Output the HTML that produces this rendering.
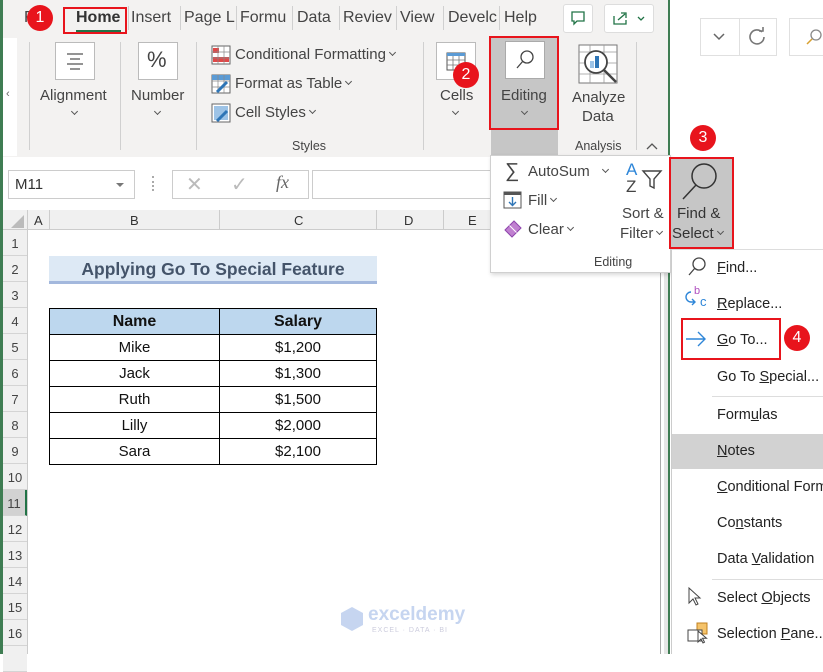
<!DOCTYPE html>
<html><head><meta charset="utf-8"><style>
*{margin:0;padding:0;box-sizing:border-box}
body{width:823px;height:654px;overflow:hidden;position:relative;background:#fff;font-family:"Liberation Sans",Arial,sans-serif;color:#333}
.a{position:absolute}
.t{font-size:16px;color:#444;white-space:nowrap}
.badge{position:absolute;width:26px;height:26px;border-radius:50%;background:#e8141c;color:#fff;font-size:16px;text-align:center;line-height:26px}
.red{position:absolute;border:2px solid #e8141c}
.sep{position:absolute;width:1px;background:#d0d0d0}
.rh{position:absolute;left:3px;width:24px;height:26px;border-bottom:1px solid #d4d4d4;text-align:center;font-size:13px;color:#444;line-height:28px;background:#f0f0f0}
.cell{position:absolute;border:1px solid #000;text-align:center;font-size:15px;color:#111;line-height:25px}
.mi{position:absolute;left:717px;font-size:14.5px;color:#222;white-space:nowrap}
u{text-decoration:underline}
.cv{display:inline-block;width:5px;height:5px;border-right:1.3px solid #555;border-bottom:1.3px solid #555;transform:rotate(45deg);margin-left:4px;vertical-align:4px}
.cva{position:absolute;width:5px;height:5px;border-right:1.3px solid #555;border-bottom:1.3px solid #555;transform:rotate(45deg)}
</style></head><body>
<div class="a" style="left:0;top:0;width:670px;height:654px;background:#fff;border-left:3px solid #3f7d53"></div>
<div class="a" style="left:3px;top:0;width:667px;height:157px;background:#f3f2f1"></div>
<div class="a" style="left:668px;top:0;width:2px;height:654px;background:#3f7d53"></div>
<div class="a t" style="left:24px;top:9px;font-size:16px">F</div>
<div class="a t" style="left:76px;top:9px;font-weight:bold;color:#333">Home</div>
<div class="a" style="left:76px;top:30px;width:45px;height:2px;background:#217346"></div>
<div class="red" style="left:63px;top:7px;width:64px;height:27px"></div>
<div class="a t" style="left:131px;top:9px">Insert</div>
<div class="a t" style="left:184px;top:9px">Page L</div>
<div class="a t" style="left:240px;top:9px">Formu</div>
<div class="a t" style="left:297px;top:9px">Data</div>
<div class="a t" style="left:343px;top:9px">Reviev</div>
<div class="a t" style="left:400px;top:9px">View</div>
<div class="a t" style="left:448px;top:9px">Develc</div>
<div class="a t" style="left:504px;top:9px">Help</div>
<div class="sep" style="left:128px;top:6px;height:24px"></div><div class="sep" style="left:180px;top:6px;height:24px"></div><div class="sep" style="left:236px;top:6px;height:24px"></div><div class="sep" style="left:292px;top:6px;height:24px"></div><div class="sep" style="left:339px;top:6px;height:24px"></div><div class="sep" style="left:396px;top:6px;height:24px"></div><div class="sep" style="left:443px;top:6px;height:24px"></div><div class="sep" style="left:499px;top:6px;height:24px"></div>
<div class="a" style="left:563px;top:4px;width:30px;height:29px;background:#fff;border:1px solid #ddd;border-radius:3px"></div>
<svg class="a" style="left:570px;top:10px" width="16" height="16"><path d="M2 2h12v9H7l-3 3v-3H2z" fill="none" stroke="#217346" stroke-width="1.3"/></svg>
<div class="a" style="left:604px;top:4px;width:50px;height:29px;background:#fff;border:1px solid #ddd;border-radius:3px"></div>
<svg class="a" style="left:612px;top:10px" width="36" height="16"><path d="M2 6v8h12v-4M6 10l7-6M9 3h5v5" fill="none" stroke="#217346" stroke-width="1.3"/><path d="M26 7l3 3 3-3" fill="none" stroke="#217346" stroke-width="1.3"/></svg>
<div class="badge" style="left:27px;top:5px">1</div>
<div class="a" style="left:3px;top:38px;width:14px;height:118px;background:#fff"></div>
<div class="a" style="left:6px;top:88px;font-size:11px;color:#666">‹</div>
<div class="sep" style="left:29px;top:42px;height:108px"></div>
<div class="sep" style="left:120px;top:42px;height:108px"></div>
<div class="sep" style="left:196px;top:42px;height:108px"></div>
<div class="sep" style="left:423px;top:42px;height:108px"></div>
<div class="sep" style="left:636px;top:42px;height:108px"></div>
<div class="a" style="left:55px;top:42px;width:40px;height:38px;background:#fff;border:1px solid #bbb"></div>
<svg class="a" style="left:65px;top:51px" width="20" height="20"><path d="M2 3h16M5 8h10M2 13h16M5 18h10" stroke="#555" stroke-width="1.2"/></svg>
<div class="a t" style="left:40px;top:87px;font-size:15px">Alignment</div>
<div class="cva" style="left:72px;top:109px"></div>
<div class="a" style="left:138px;top:42px;width:40px;height:38px;background:#fff;border:1px solid #bbb"></div>
<div class="a" style="left:147px;top:47px;font-size:22px;color:#444">%</div>
<div class="a t" style="left:131px;top:87px;font-size:15px">Number</div>
<div class="cva" style="left:155px;top:109px"></div>
<svg class="a" style="left:211px;top:45px" width="20" height="20"><rect x="1" y="1" width="18" height="18" fill="#fff" stroke="#666"/><rect x="2" y="3" width="6" height="5" fill="#e04848"/><rect x="2" y="12" width="16" height="5" fill="#e04848"/><path d="M1 7h18M1 13h18M7 1v18M13 1v18" stroke="#888" stroke-width=".7"/></svg>
<div class="a t" style="left:235px;top:46px;font-size:15px">Conditional Formatting<span class="cv"></span></div>
<svg class="a" style="left:211px;top:74px" width="20" height="20"><rect x="1" y="1" width="18" height="18" fill="#fff" stroke="#666"/><rect x="1" y="1" width="18" height="5" fill="#5b9bd5"/><path d="M1 7h18M1 13h18M7 1v18M13 1v18" stroke="#888" stroke-width=".7"/><path d="M6 18l10-10" stroke="#2e75b6" stroke-width="3"/></svg>
<div class="a t" style="left:235px;top:75px;font-size:15px">Format as Table<span class="cv"></span></div>
<svg class="a" style="left:211px;top:103px" width="20" height="20"><rect x="1" y="1" width="18" height="18" fill="#fff" stroke="#666"/><rect x="3" y="3" width="14" height="14" fill="#9dc3e6"/><path d="M6 18l10-10" stroke="#2e75b6" stroke-width="3"/></svg>
<div class="a t" style="left:235px;top:104px;font-size:15px">Cell Styles<span class="cv"></span></div>
<div class="a" style="left:292px;top:139px;font-size:12.5px;color:#444">Styles</div>
<div class="a" style="left:436px;top:42px;width:40px;height:38px;background:#fff;border:1px solid #bbb"></div>
<svg class="a" style="left:445px;top:50px" width="22" height="22"><rect x="2" y="3" width="18" height="17" fill="#fff" stroke="#555"/><rect x="2" y="3" width="18" height="3" fill="#5b9bd5"/><path d="M2 10h18M2 15h18M8 6v14M14 6v14" stroke="#777" stroke-width=".8"/></svg>
<div class="a t" style="left:440px;top:87px;font-size:15px">Cells</div>
<div class="cva" style="left:453px;top:109px"></div>
<div class="badge" style="left:453px;top:62px">2</div>
<div class="a" style="left:491px;top:37px;width:67px;height:120px;background:#c6c6c6"></div>
<div class="red" style="left:489px;top:36px;width:70px;height:94px"></div>
<div class="a" style="left:505px;top:41px;width:40px;height:38px;background:#fff;border:1px solid #aaa"></div>
<svg class="a" style="left:514px;top:49px" width="22" height="22"><circle cx="13" cy="8" r="6" fill="none" stroke="#444" stroke-width="1.3"/><path d="M9 12l-6 7" stroke="#444" stroke-width="1.3"/></svg>
<div class="a t" style="left:501px;top:87px;font-size:15px">Editing</div>
<div class="cva" style="left:522px;top:109px"></div>
<svg class="a" style="left:577px;top:43px" width="42" height="42"><rect x="2" y="2" width="38" height="38" fill="#fff" stroke="#777"/><path d="M2 9h38M2 20h38M2 31h38M13 2v38M27 2v38" stroke="#999" stroke-width=".8"/><circle cx="19" cy="19" r="11" fill="#fff" stroke="#444" stroke-width="1.8"/><rect x="13" y="18" width="4" height="7" fill="#9dc3e6"/><rect x="18" y="13" width="4" height="12" fill="#2e75b6"/><path d="M27 27l12 12" stroke="#444" stroke-width="2.5"/></svg>
<div class="a t" style="left:572px;top:89px;font-size:15px">Analyze</div>
<div class="a t" style="left:582px;top:108px;font-size:15px">Data</div>
<div class="a" style="left:575px;top:139px;font-size:12.5px;color:#444">Analysis</div>
<svg class="a" style="left:646px;top:142px" width="12" height="8"><path d="M1 7l5-5 5 5" fill="none" stroke="#555" stroke-width="1.3"/></svg>
<div class="a" style="left:8px;top:170px;width:127px;height:29px;background:#fff;border:1px solid #ccc"></div>
<div class="a" style="left:15px;top:176px;font-size:15px;color:#333">M11</div>
<div class="a" style="left:116px;top:183px;border:4px solid transparent;border-top:4px solid #777"></div>
<div class="a" style="left:152px;top:176px;width:2px;height:15px;border-left:2px dotted #aaa"></div>
<div class="a" style="left:172px;top:170px;width:137px;height:29px;background:#fff;border:1px solid #ccc"></div>
<div class="a" style="left:186px;top:172px;font-size:20px;color:#bbb">✕</div>
<div class="a" style="left:231px;top:172px;font-size:20px;color:#bbb">✓</div>
<div class="a" style="left:276px;top:172px;font-size:18px;color:#666;font-style:italic;font-family:'Liberation Serif',serif">fx</div>
<div class="a" style="left:312px;top:170px;width:180px;height:29px;background:#fff;border:1px solid #ccc"></div>
<div class="a" style="left:3px;top:210px;width:665px;height:20px;background:#f0f0f0;border-bottom:1px solid #ccc"></div>
<svg class="a" style="left:8px;top:213px" width="18" height="16"><path d="M16 2v13H3z" fill="#bbb"/></svg>
<div class="a" style="left:27px;top:210px;width:1px;height:20px;background:#ccc"></div>
<div class="a" style="left:49px;top:210px;width:1px;height:20px;background:#ccc"></div>
<div class="a" style="left:219px;top:210px;width:1px;height:20px;background:#ccc"></div>
<div class="a" style="left:376px;top:210px;width:1px;height:20px;background:#ccc"></div>
<div class="a" style="left:443px;top:210px;width:1px;height:20px;background:#ccc"></div>
<div class="a" style="left:34px;top:213px;font-size:13px">A</div>
<div class="a" style="left:130px;top:213px;font-size:13px">B</div>
<div class="a" style="left:294px;top:213px;font-size:13px">C</div>
<div class="a" style="left:404px;top:213px;font-size:13px">D</div>
<div class="a" style="left:468px;top:213px;font-size:13px">E</div>
<div class="rh" style="top:230px">1</div><div class="rh" style="top:256px">2</div><div class="rh" style="top:282px">3</div><div class="rh" style="top:308px">4</div><div class="rh" style="top:334px">5</div><div class="rh" style="top:360px">6</div><div class="rh" style="top:386px">7</div><div class="rh" style="top:412px">8</div><div class="rh" style="top:438px">9</div><div class="rh" style="top:464px">10</div><div class="rh" style="top:490px;background:#d2d2d2;border-right:2px solid #217346">11</div><div class="rh" style="top:516px">12</div><div class="rh" style="top:542px">13</div><div class="rh" style="top:568px">14</div><div class="rh" style="top:594px">15</div><div class="rh" style="top:620px">16</div><div class="rh" style="top:646px"></div>
<div class="a" style="left:27px;top:230px;width:1px;height:424px;background:#ccc"></div>
<div class="a" style="left:660px;top:230px;width:1px;height:424px;background:#aaa"></div>
<div class="a" style="left:664px;top:200px;width:4px;height:454px;background:#e6e6e6"></div>
<div class="a" style="left:49px;top:256px;width:328px;height:28px;background:#dde9f5;border-bottom:3px solid #a3b8dd;text-align:center;font-weight:bold;font-size:17.5px;color:#44546a;line-height:26px">Applying Go To Special Feature</div>
<div class="cell" style="left:49px;top:308px;width:171px;height:27px;background:#bdd7ee;font-weight:bold;font-size:16px">Name</div>
<div class="cell" style="left:219px;top:308px;width:158px;height:27px;background:#bdd7ee;font-weight:bold;font-size:16px">Salary</div>
<div class="cell" style="left:49px;top:334px;width:171px;height:27px">Mike</div><div class="cell" style="left:219px;top:334px;width:158px;height:27px">$1,200</div>
<div class="cell" style="left:49px;top:360px;width:171px;height:27px">Jack</div><div class="cell" style="left:219px;top:360px;width:158px;height:27px">$1,300</div>
<div class="cell" style="left:49px;top:386px;width:171px;height:27px">Ruth</div><div class="cell" style="left:219px;top:386px;width:158px;height:27px">$1,500</div>
<div class="cell" style="left:49px;top:412px;width:171px;height:27px">Lilly</div><div class="cell" style="left:219px;top:412px;width:158px;height:27px">$2,000</div>
<div class="cell" style="left:49px;top:438px;width:171px;height:27px">Sara</div><div class="cell" style="left:219px;top:438px;width:158px;height:27px">$2,100</div>
<svg class="a" style="left:340px;top:606px" width="24" height="26"><path d="M12 1l11 6v12l-11 6-11-6V7z" fill="#c6d5f0"/></svg>
<div class="a" style="left:368px;top:604px;font-size:19px;font-weight:bold;color:#c6d5f0">exceldemy</div>
<div class="a" style="left:372px;top:627px;font-size:7px;color:#ccd;letter-spacing:1px">EXCEL · DATA · BI</div>
<div class="a" style="left:700px;top:18px;width:40px;height:38px;border:1px solid #e0e0e0"></div>
<svg class="a" style="left:712px;top:32px" width="14" height="10"><path d="M2 2l5 5 5-5" fill="none" stroke="#666" stroke-width="1.5"/></svg>
<div class="a" style="left:739px;top:18px;width:38px;height:38px;border:1px solid #e0e0e0"></div>
<svg class="a" style="left:748px;top:27px" width="20" height="20"><path d="M14 5a7 7 0 1 0 2 5" fill="none" stroke="#777" stroke-width="1.6"/><path d="M11 4h4V0" fill="none" stroke="#777" stroke-width="1.6"/></svg>
<div class="a" style="left:789px;top:18px;width:40px;height:38px;border:1px solid #e0e0e0"></div>
<svg class="a" style="left:805px;top:28px" width="18" height="18"><circle cx="11" cy="7" r="5" fill="none" stroke="#888" stroke-width="1.3"/><path d="M7 11l-5 5" stroke="#d8a030" stroke-width="1.5"/></svg>
<div class="badge" style="left:690px;top:125px">3</div>
<div class="a" style="left:490px;top:155px;width:181px;height:118px;background:#fff;border:1px solid #d0d0d0;box-shadow:1px 2px 4px rgba(0,0,0,.15)"></div>
<div class="a" style="left:505px;top:160px;font-size:20px;color:#444">∑</div>
<div class="a t" style="left:528px;top:163px;font-size:15px">AutoSum</div>
<div class="cva" style="left:603px;top:167px"></div>
<svg class="a" style="left:503px;top:190px" width="20" height="20"><rect x="1" y="2" width="17" height="16" fill="#fff" stroke="#555"/><rect x="1" y="2" width="17" height="3" fill="#555"/><path d="M9.5 7v8M6 12l3.5 3.5L13 12" fill="none" stroke="#2e75b6" stroke-width="1.4"/></svg>
<div class="a t" style="left:528px;top:192px;font-size:15px">Fill<span class="cv"></span></div>
<svg class="a" style="left:503px;top:219px" width="22" height="20"><path d="M2 11l9-9 7 7-9 9z" fill="#c080d0" stroke="#8e44ad"/><path d="M6.5 6.5l7 7" stroke="#fff" stroke-width="1"/></svg>
<div class="a t" style="left:528px;top:221px;font-size:15px">Clear<span class="cv"></span></div>
<div class="a" style="left:626px;top:161px;font-size:17px;color:#2e86d8;line-height:17px">A</div>
<div class="a" style="left:626px;top:178px;font-size:17px;color:#444;line-height:17px">Z</div>
<svg class="a" style="left:641px;top:168px" width="22" height="24"><path d="M2 3h18l-7 8v9l-4-2v-7z" fill="none" stroke="#444" stroke-width="1.4"/></svg>
<div class="a t" style="left:622px;top:205px;font-size:15px">Sort &amp;</div>
<div class="a t" style="left:620px;top:225px;font-size:15px">Filter<span class="cv"></span></div>
<div class="a" style="left:594px;top:255px;font-size:12.5px;color:#444">Editing</div>
<div class="a" style="left:670px;top:157px;width:63px;height:91px;background:#c6c6c6"></div>
<div class="red" style="left:669px;top:157px;width:65px;height:92px"></div>
<svg class="a" style="left:676px;top:160px" width="46" height="42"><circle cx="28" cy="16" r="12" fill="none" stroke="#333" stroke-width="1.5"/><path d="M20 25l-13 14" stroke="#333" stroke-width="1.5"/></svg>
<div class="a t" style="left:677px;top:205px;font-size:15px;color:#333">Find &amp;</div>
<div class="a t" style="left:672px;top:225px;font-size:15px;color:#333">Select<span class="cv"></span></div>
<div class="a" style="left:671px;top:249px;width:152px;height:405px;background:#fff;border-left:1px solid #ccc;border-top:1px solid #ddd"></div>
<svg class="a" style="left:686px;top:256px" width="22" height="22"><circle cx="13" cy="8" r="6" fill="none" stroke="#444" stroke-width="1.3"/><path d="M9 12l-6 7" stroke="#444" stroke-width="1.3"/></svg>
<div class="mi" style="top:260px"><u>F</u>ind...</div>
<svg class="a" style="left:684px;top:284px" width="26" height="26"><path d="M7 8a5 5 0 0 0 0 10h4M8 21l3-3-3-3" fill="none" stroke="#2e86d8" stroke-width="1.4"/><text x="10" y="10" font-size="11" fill="#b04fc0" font-family="Liberation Sans">b</text><text x="16" y="22" font-size="13" fill="#2e86d8" font-family="Liberation Sans">c</text></svg>
<div class="mi" style="top:296px"><u>R</u>eplace...</div>
<div class="red" style="left:681px;top:318px;width:100px;height:42px"></div>
<svg class="a" style="left:685px;top:331px" width="22" height="16"><path d="M1 8h19M13 1l7 7-7 7" fill="none" stroke="#2e86d8" stroke-width="1.4"/></svg>
<div class="mi" style="top:332px"><u>G</u>o To...</div>
<div class="badge" style="left:784px;top:325px">4</div>
<div class="mi" style="top:369px">Go To <u>S</u>pecial...</div>
<div class="a" style="left:712px;top:396px;width:111px;height:1px;background:#ddd"></div>
<div class="mi" style="top:407px">Form<u>u</u>las</div>
<div class="a" style="left:672px;top:434px;width:151px;height:35px;background:#d2d2d2"></div>
<div class="mi" style="top:443px"><u>N</u>otes</div>
<div class="mi" style="top:479px"><u>C</u>onditional Form</div>
<div class="mi" style="top:515px">Co<u>n</u>stants</div>
<div class="mi" style="top:551px">Data <u>V</u>alidation</div>
<div class="a" style="left:712px;top:579px;width:111px;height:1px;background:#ddd"></div>
<svg class="a" style="left:686px;top:586px" width="18" height="22"><path d="M3 2v15l4-4 3 6 2-1-3-6h5z" fill="#fff" stroke="#444"/></svg>
<div class="mi" style="top:590px">Select <u>O</u>bjects</div>
<svg class="a" style="left:686px;top:621px" width="24" height="24"><rect x="11" y="2" width="10" height="11" fill="#f5c36a" stroke="#c08020"/><rect x="2" y="9" width="14" height="11" fill="#fff" stroke="#444"/><path d="M12 10v11l3-3 2 4 1.5-.8-2-4h4z" fill="#fff" stroke="#444"/></svg>
<div class="mi" style="top:626px">Selection <u>P</u>ane...</div>
</body></html>
